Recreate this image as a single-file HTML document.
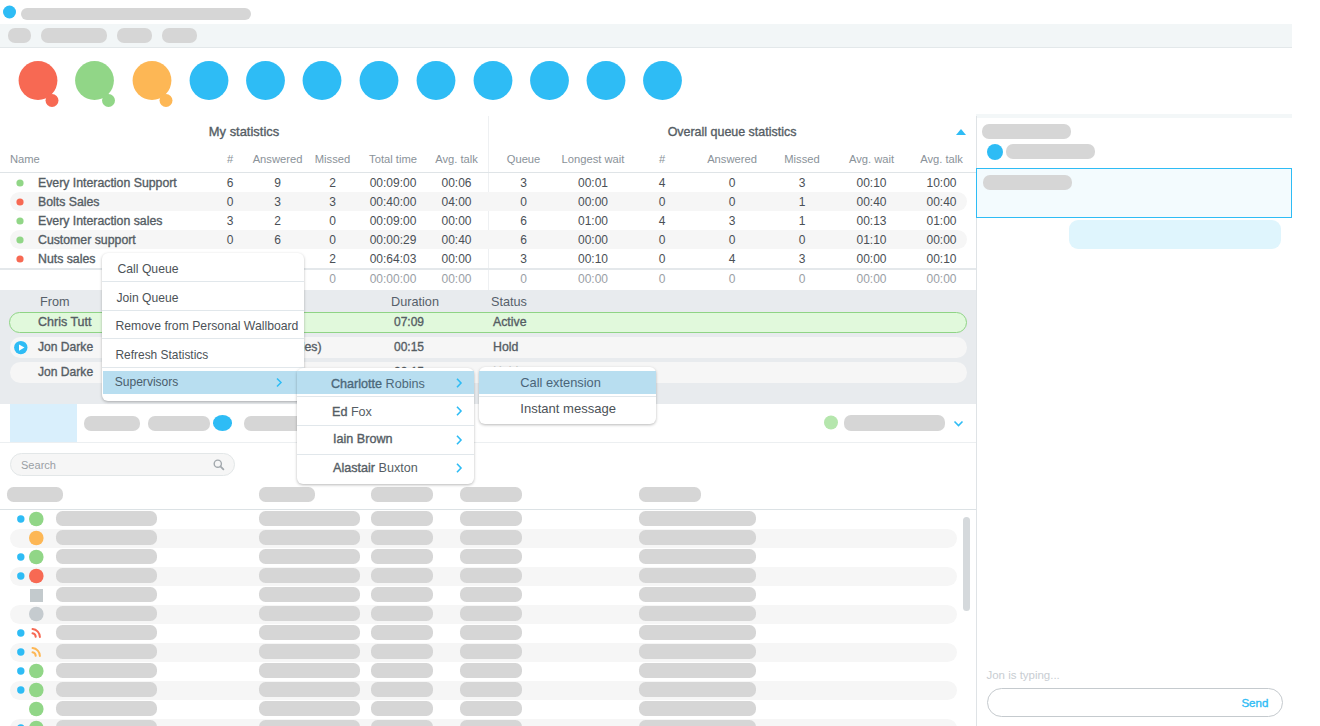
<!DOCTYPE html>
<html><head><meta charset="utf-8">
<style>
*{margin:0;padding:0;box-sizing:border-box}
html,body{width:1320px;height:726px;overflow:hidden;background:#fff;font-family:"Liberation Sans",sans-serif;color:#555d64}
.a{position:absolute}
.t{position:absolute;white-space:nowrap;line-height:0;height:0}
.bl{display:inline-block;line-height:0;vertical-align:baseline}
</style></head><body>

<svg class="a" style="left:2px;top:4px" width="16" height="16"><circle cx="7.5" cy="8" r="6.5" fill="#2ebcf5"/></svg>
<div class="a" style="left:21px;top:8px;width:230px;height:12px;border-radius:6.0px;background:#d6d6d6;"></div>
<div class="a" style="left:0px;top:24px;width:1292px;height:24px;background:#f2f6f7;border-bottom:1px solid #e3e8ea"></div>
<div class="a" style="left:8px;top:28px;width:23px;height:15px;border-radius:7px;background:#d6d6d6;"></div>
<div class="a" style="left:41px;top:28px;width:66px;height:15px;border-radius:7px;background:#d6d6d6;"></div>
<div class="a" style="left:117px;top:28px;width:35px;height:15px;border-radius:7px;background:#d6d6d6;"></div>
<div class="a" style="left:162px;top:28px;width:35px;height:15px;border-radius:7px;background:#d6d6d6;"></div>
<svg class="a" style="left:17px;top:60px" width="41" height="41"><circle cx="21" cy="20.5" r="19.4" fill="#f76953"/></svg>
<svg class="a" style="left:44px;top:93px" width="16" height="16"><circle cx="8" cy="7.5" r="6.5" fill="#f76953"/></svg>
<svg class="a" style="left:74px;top:60px" width="41" height="41"><circle cx="20.5" cy="20.5" r="19.4" fill="#91d687"/></svg>
<svg class="a" style="left:101px;top:93px" width="16" height="16"><circle cx="7.5" cy="7.5" r="6.5" fill="#91d687"/></svg>
<svg class="a" style="left:131px;top:60px" width="41" height="41"><circle cx="21" cy="20.5" r="19.4" fill="#fdb755"/></svg>
<svg class="a" style="left:158px;top:93px" width="16" height="16"><circle cx="8" cy="7.5" r="6.5" fill="#fdb755"/></svg>
<svg class="a" style="left:188px;top:60px" width="41" height="41"><circle cx="21" cy="20.5" r="19.4" fill="#2ebcf5"/></svg>
<svg class="a" style="left:245px;top:60px" width="41" height="41"><circle cx="20.5" cy="20.5" r="19.4" fill="#2ebcf5"/></svg>
<svg class="a" style="left:301px;top:60px" width="41" height="41"><circle cx="21" cy="20.5" r="19.4" fill="#2ebcf5"/></svg>
<svg class="a" style="left:358px;top:60px" width="41" height="41"><circle cx="21" cy="20.5" r="19.4" fill="#2ebcf5"/></svg>
<svg class="a" style="left:415px;top:60px" width="41" height="41"><circle cx="21" cy="20.5" r="19.4" fill="#2ebcf5"/></svg>
<svg class="a" style="left:472px;top:60px" width="41" height="41"><circle cx="21" cy="20.5" r="19.4" fill="#2ebcf5"/></svg>
<svg class="a" style="left:529px;top:60px" width="41" height="41"><circle cx="20.5" cy="20.5" r="19.4" fill="#2ebcf5"/></svg>
<svg class="a" style="left:585px;top:60px" width="41" height="41"><circle cx="21" cy="20.5" r="19.4" fill="#2ebcf5"/></svg>
<svg class="a" style="left:642px;top:60px" width="41" height="41"><circle cx="20.5" cy="20.5" r="19.4" fill="#2ebcf5"/></svg>
<div class="a" style="left:488px;top:116px;width:1px;height:174px;background:#eef0f2"></div>
<div class="t" style="left:94px;width:300px;text-align:center;top:131.52px;font-size:12.93px;color:#555d64;font-weight:normal;-webkit-text-stroke:0.35px #555d64;"><span class="bl">My statistics</span></div>
<div class="t" style="left:582px;width:300px;text-align:center;top:131.68px;font-size:12.46px;color:#555d64;font-weight:normal;-webkit-text-stroke:0.35px #555d64;"><span class="bl">Overall queue statistics</span></div>
<svg class="a" style="left:955px;top:127px" width="12" height="9"><path d="M1 8 L6 2 L11 8 Z" fill="#2ebcf5"/></svg>
<div class="t" style="left:10px;top:159.12px;font-size:11.2px;color:#8a9299;font-weight:normal;"><span class="bl">Name</span></div>
<div class="t" style="left:80px;width:300px;text-align:center;top:159.12px;font-size:11.2px;color:#8a9299;font-weight:normal;"><span class="bl">#</span></div>
<div class="t" style="left:127.5px;width:300px;text-align:center;top:159.12px;font-size:11.2px;color:#8a9299;font-weight:normal;"><span class="bl">Answered</span></div>
<div class="t" style="left:182.5px;width:300px;text-align:center;top:159.12px;font-size:11.2px;color:#8a9299;font-weight:normal;"><span class="bl">Missed</span></div>
<div class="t" style="left:243px;width:300px;text-align:center;top:159.12px;font-size:11.2px;color:#8a9299;font-weight:normal;"><span class="bl">Total time</span></div>
<div class="t" style="left:306.5px;width:300px;text-align:center;top:159.12px;font-size:11.2px;color:#8a9299;font-weight:normal;"><span class="bl">Avg. talk</span></div>
<div class="t" style="left:373.5px;width:300px;text-align:center;top:159.12px;font-size:11.2px;color:#8a9299;font-weight:normal;"><span class="bl">Queue</span></div>
<div class="t" style="left:443px;width:300px;text-align:center;top:159.12px;font-size:11.2px;color:#8a9299;font-weight:normal;"><span class="bl">Longest wait</span></div>
<div class="t" style="left:512px;width:300px;text-align:center;top:159.12px;font-size:11.2px;color:#8a9299;font-weight:normal;"><span class="bl">#</span></div>
<div class="t" style="left:582px;width:300px;text-align:center;top:159.12px;font-size:11.2px;color:#8a9299;font-weight:normal;"><span class="bl">Answered</span></div>
<div class="t" style="left:652px;width:300px;text-align:center;top:159.12px;font-size:11.2px;color:#8a9299;font-weight:normal;"><span class="bl">Missed</span></div>
<div class="t" style="left:721.5px;width:300px;text-align:center;top:159.12px;font-size:11.2px;color:#8a9299;font-weight:normal;"><span class="bl">Avg. wait</span></div>
<div class="t" style="left:791.5px;width:300px;text-align:center;top:159.12px;font-size:11.2px;color:#8a9299;font-weight:normal;"><span class="bl">Avg. talk</span></div>
<div class="a" style="left:0px;top:172px;width:976px;height:1px;background:#dfe4e7"></div>
<svg class="a" style="left:15px;top:178px" width="10" height="10"><circle cx="5" cy="5" r="3.6" fill="#91d687"/></svg>
<div class="t" style="left:38px;top:182.74px;font-size:12.3px;color:#555d64;font-weight:normal;-webkit-text-stroke:0.35px #555d64;"><span class="bl">Every Interaction Support</span></div>
<div class="t" style="left:80px;width:300px;text-align:center;top:182.84px;font-size:12px;color:#4a5056;font-weight:normal;"><span class="bl">6</span></div>
<div class="t" style="left:127.5px;width:300px;text-align:center;top:182.84px;font-size:12px;color:#4a5056;font-weight:normal;"><span class="bl">9</span></div>
<div class="t" style="left:182.5px;width:300px;text-align:center;top:182.84px;font-size:12px;color:#4a5056;font-weight:normal;"><span class="bl">2</span></div>
<div class="t" style="left:243px;width:300px;text-align:center;top:182.84px;font-size:12px;color:#4a5056;font-weight:normal;"><span class="bl">00:09:00</span></div>
<div class="t" style="left:306.5px;width:300px;text-align:center;top:182.84px;font-size:12px;color:#4a5056;font-weight:normal;"><span class="bl">00:06</span></div>
<div class="t" style="left:373.5px;width:300px;text-align:center;top:182.84px;font-size:12px;color:#4a5056;font-weight:normal;"><span class="bl">3</span></div>
<div class="t" style="left:443px;width:300px;text-align:center;top:182.84px;font-size:12px;color:#4a5056;font-weight:normal;"><span class="bl">00:01</span></div>
<div class="t" style="left:512px;width:300px;text-align:center;top:182.84px;font-size:12px;color:#4a5056;font-weight:normal;"><span class="bl">4</span></div>
<div class="t" style="left:582px;width:300px;text-align:center;top:182.84px;font-size:12px;color:#4a5056;font-weight:normal;"><span class="bl">0</span></div>
<div class="t" style="left:652px;width:300px;text-align:center;top:182.84px;font-size:12px;color:#4a5056;font-weight:normal;"><span class="bl">3</span></div>
<div class="t" style="left:721.5px;width:300px;text-align:center;top:182.84px;font-size:12px;color:#4a5056;font-weight:normal;"><span class="bl">00:10</span></div>
<div class="t" style="left:791.5px;width:300px;text-align:center;top:182.84px;font-size:12px;color:#4a5056;font-weight:normal;"><span class="bl">10:00</span></div>
<div class="a" style="left:10px;top:192px;width:957px;height:19px;border-radius:9.5px;background:#f6f6f6;"></div>
<svg class="a" style="left:15px;top:197px" width="10" height="10"><circle cx="5" cy="5" r="3.6" fill="#f76953"/></svg>
<div class="t" style="left:38px;top:201.74px;font-size:12.3px;color:#555d64;font-weight:normal;-webkit-text-stroke:0.35px #555d64;"><span class="bl">Bolts Sales</span></div>
<div class="t" style="left:80px;width:300px;text-align:center;top:201.84px;font-size:12px;color:#4a5056;font-weight:normal;"><span class="bl">0</span></div>
<div class="t" style="left:127.5px;width:300px;text-align:center;top:201.84px;font-size:12px;color:#4a5056;font-weight:normal;"><span class="bl">3</span></div>
<div class="t" style="left:182.5px;width:300px;text-align:center;top:201.84px;font-size:12px;color:#4a5056;font-weight:normal;"><span class="bl">3</span></div>
<div class="t" style="left:243px;width:300px;text-align:center;top:201.84px;font-size:12px;color:#4a5056;font-weight:normal;"><span class="bl">00:40:00</span></div>
<div class="t" style="left:306.5px;width:300px;text-align:center;top:201.84px;font-size:12px;color:#4a5056;font-weight:normal;"><span class="bl">04:00</span></div>
<div class="t" style="left:373.5px;width:300px;text-align:center;top:201.84px;font-size:12px;color:#4a5056;font-weight:normal;"><span class="bl">0</span></div>
<div class="t" style="left:443px;width:300px;text-align:center;top:201.84px;font-size:12px;color:#4a5056;font-weight:normal;"><span class="bl">00:00</span></div>
<div class="t" style="left:512px;width:300px;text-align:center;top:201.84px;font-size:12px;color:#4a5056;font-weight:normal;"><span class="bl">0</span></div>
<div class="t" style="left:582px;width:300px;text-align:center;top:201.84px;font-size:12px;color:#4a5056;font-weight:normal;"><span class="bl">0</span></div>
<div class="t" style="left:652px;width:300px;text-align:center;top:201.84px;font-size:12px;color:#4a5056;font-weight:normal;"><span class="bl">1</span></div>
<div class="t" style="left:721.5px;width:300px;text-align:center;top:201.84px;font-size:12px;color:#4a5056;font-weight:normal;"><span class="bl">00:40</span></div>
<div class="t" style="left:791.5px;width:300px;text-align:center;top:201.84px;font-size:12px;color:#4a5056;font-weight:normal;"><span class="bl">00:40</span></div>
<svg class="a" style="left:15px;top:216px" width="10" height="10"><circle cx="5" cy="5" r="3.6" fill="#91d687"/></svg>
<div class="t" style="left:38px;top:220.74px;font-size:12.3px;color:#555d64;font-weight:normal;-webkit-text-stroke:0.35px #555d64;"><span class="bl">Every Interaction sales</span></div>
<div class="t" style="left:80px;width:300px;text-align:center;top:220.84px;font-size:12px;color:#4a5056;font-weight:normal;"><span class="bl">3</span></div>
<div class="t" style="left:127.5px;width:300px;text-align:center;top:220.84px;font-size:12px;color:#4a5056;font-weight:normal;"><span class="bl">2</span></div>
<div class="t" style="left:182.5px;width:300px;text-align:center;top:220.84px;font-size:12px;color:#4a5056;font-weight:normal;"><span class="bl">0</span></div>
<div class="t" style="left:243px;width:300px;text-align:center;top:220.84px;font-size:12px;color:#4a5056;font-weight:normal;"><span class="bl">00:09:00</span></div>
<div class="t" style="left:306.5px;width:300px;text-align:center;top:220.84px;font-size:12px;color:#4a5056;font-weight:normal;"><span class="bl">00:00</span></div>
<div class="t" style="left:373.5px;width:300px;text-align:center;top:220.84px;font-size:12px;color:#4a5056;font-weight:normal;"><span class="bl">6</span></div>
<div class="t" style="left:443px;width:300px;text-align:center;top:220.84px;font-size:12px;color:#4a5056;font-weight:normal;"><span class="bl">01:00</span></div>
<div class="t" style="left:512px;width:300px;text-align:center;top:220.84px;font-size:12px;color:#4a5056;font-weight:normal;"><span class="bl">4</span></div>
<div class="t" style="left:582px;width:300px;text-align:center;top:220.84px;font-size:12px;color:#4a5056;font-weight:normal;"><span class="bl">3</span></div>
<div class="t" style="left:652px;width:300px;text-align:center;top:220.84px;font-size:12px;color:#4a5056;font-weight:normal;"><span class="bl">1</span></div>
<div class="t" style="left:721.5px;width:300px;text-align:center;top:220.84px;font-size:12px;color:#4a5056;font-weight:normal;"><span class="bl">00:13</span></div>
<div class="t" style="left:791.5px;width:300px;text-align:center;top:220.84px;font-size:12px;color:#4a5056;font-weight:normal;"><span class="bl">01:00</span></div>
<div class="a" style="left:10px;top:230px;width:957px;height:19px;border-radius:9.5px;background:#f6f6f6;"></div>
<svg class="a" style="left:15px;top:235px" width="10" height="10"><circle cx="5" cy="5" r="3.6" fill="#91d687"/></svg>
<div class="t" style="left:38px;top:239.74px;font-size:12.3px;color:#555d64;font-weight:normal;-webkit-text-stroke:0.35px #555d64;"><span class="bl">Customer support</span></div>
<div class="t" style="left:80px;width:300px;text-align:center;top:239.84px;font-size:12px;color:#4a5056;font-weight:normal;"><span class="bl">0</span></div>
<div class="t" style="left:127.5px;width:300px;text-align:center;top:239.84px;font-size:12px;color:#4a5056;font-weight:normal;"><span class="bl">6</span></div>
<div class="t" style="left:182.5px;width:300px;text-align:center;top:239.84px;font-size:12px;color:#4a5056;font-weight:normal;"><span class="bl">0</span></div>
<div class="t" style="left:243px;width:300px;text-align:center;top:239.84px;font-size:12px;color:#4a5056;font-weight:normal;"><span class="bl">00:00:29</span></div>
<div class="t" style="left:306.5px;width:300px;text-align:center;top:239.84px;font-size:12px;color:#4a5056;font-weight:normal;"><span class="bl">00:40</span></div>
<div class="t" style="left:373.5px;width:300px;text-align:center;top:239.84px;font-size:12px;color:#4a5056;font-weight:normal;"><span class="bl">6</span></div>
<div class="t" style="left:443px;width:300px;text-align:center;top:239.84px;font-size:12px;color:#4a5056;font-weight:normal;"><span class="bl">00:00</span></div>
<div class="t" style="left:512px;width:300px;text-align:center;top:239.84px;font-size:12px;color:#4a5056;font-weight:normal;"><span class="bl">0</span></div>
<div class="t" style="left:582px;width:300px;text-align:center;top:239.84px;font-size:12px;color:#4a5056;font-weight:normal;"><span class="bl">0</span></div>
<div class="t" style="left:652px;width:300px;text-align:center;top:239.84px;font-size:12px;color:#4a5056;font-weight:normal;"><span class="bl">0</span></div>
<div class="t" style="left:721.5px;width:300px;text-align:center;top:239.84px;font-size:12px;color:#4a5056;font-weight:normal;"><span class="bl">01:10</span></div>
<div class="t" style="left:791.5px;width:300px;text-align:center;top:239.84px;font-size:12px;color:#4a5056;font-weight:normal;"><span class="bl">00:00</span></div>
<svg class="a" style="left:15px;top:254px" width="10" height="10"><circle cx="5" cy="5" r="3.6" fill="#f76953"/></svg>
<div class="t" style="left:38px;top:258.74px;font-size:12.3px;color:#555d64;font-weight:normal;-webkit-text-stroke:0.35px #555d64;"><span class="bl">Nuts sales</span></div>
<div class="t" style="left:80px;width:300px;text-align:center;top:258.84px;font-size:12px;color:#4a5056;font-weight:normal;"><span class="bl">0</span></div>
<div class="t" style="left:127.5px;width:300px;text-align:center;top:258.84px;font-size:12px;color:#4a5056;font-weight:normal;"><span class="bl">0</span></div>
<div class="t" style="left:182.5px;width:300px;text-align:center;top:258.84px;font-size:12px;color:#4a5056;font-weight:normal;"><span class="bl">2</span></div>
<div class="t" style="left:243px;width:300px;text-align:center;top:258.84px;font-size:12px;color:#4a5056;font-weight:normal;"><span class="bl">00:64:03</span></div>
<div class="t" style="left:306.5px;width:300px;text-align:center;top:258.84px;font-size:12px;color:#4a5056;font-weight:normal;"><span class="bl">00:00</span></div>
<div class="t" style="left:373.5px;width:300px;text-align:center;top:258.84px;font-size:12px;color:#4a5056;font-weight:normal;"><span class="bl">3</span></div>
<div class="t" style="left:443px;width:300px;text-align:center;top:258.84px;font-size:12px;color:#4a5056;font-weight:normal;"><span class="bl">00:10</span></div>
<div class="t" style="left:512px;width:300px;text-align:center;top:258.84px;font-size:12px;color:#4a5056;font-weight:normal;"><span class="bl">0</span></div>
<div class="t" style="left:582px;width:300px;text-align:center;top:258.84px;font-size:12px;color:#4a5056;font-weight:normal;"><span class="bl">4</span></div>
<div class="t" style="left:652px;width:300px;text-align:center;top:258.84px;font-size:12px;color:#4a5056;font-weight:normal;"><span class="bl">3</span></div>
<div class="t" style="left:721.5px;width:300px;text-align:center;top:258.84px;font-size:12px;color:#4a5056;font-weight:normal;"><span class="bl">00:00</span></div>
<div class="t" style="left:791.5px;width:300px;text-align:center;top:258.84px;font-size:12px;color:#4a5056;font-weight:normal;"><span class="bl">00:10</span></div>
<div class="a" style="left:0px;top:268px;width:976px;height:2px;background:#e4e8eb"></div>
<div class="t" style="left:80px;width:300px;text-align:center;top:278.84px;font-size:12px;color:#9aa0a6;font-weight:normal;"><span class="bl">0</span></div>
<div class="t" style="left:127.5px;width:300px;text-align:center;top:278.84px;font-size:12px;color:#9aa0a6;font-weight:normal;"><span class="bl">0</span></div>
<div class="t" style="left:182.5px;width:300px;text-align:center;top:278.84px;font-size:12px;color:#9aa0a6;font-weight:normal;"><span class="bl">0</span></div>
<div class="t" style="left:243px;width:300px;text-align:center;top:278.84px;font-size:12px;color:#9aa0a6;font-weight:normal;"><span class="bl">00:00:00</span></div>
<div class="t" style="left:306.5px;width:300px;text-align:center;top:278.84px;font-size:12px;color:#9aa0a6;font-weight:normal;"><span class="bl">00:00</span></div>
<div class="t" style="left:373.5px;width:300px;text-align:center;top:278.84px;font-size:12px;color:#9aa0a6;font-weight:normal;"><span class="bl">0</span></div>
<div class="t" style="left:443px;width:300px;text-align:center;top:278.84px;font-size:12px;color:#9aa0a6;font-weight:normal;"><span class="bl">00:00</span></div>
<div class="t" style="left:512px;width:300px;text-align:center;top:278.84px;font-size:12px;color:#9aa0a6;font-weight:normal;"><span class="bl">0</span></div>
<div class="t" style="left:582px;width:300px;text-align:center;top:278.84px;font-size:12px;color:#9aa0a6;font-weight:normal;"><span class="bl">0</span></div>
<div class="t" style="left:652px;width:300px;text-align:center;top:278.84px;font-size:12px;color:#9aa0a6;font-weight:normal;"><span class="bl">0</span></div>
<div class="t" style="left:721.5px;width:300px;text-align:center;top:278.84px;font-size:12px;color:#9aa0a6;font-weight:normal;"><span class="bl">00:00</span></div>
<div class="t" style="left:791.5px;width:300px;text-align:center;top:278.84px;font-size:12px;color:#9aa0a6;font-weight:normal;"><span class="bl">00:00</span></div>
<div class="a" style="left:0px;top:290px;width:976px;height:113.5px;background:#e8ebee"></div>
<div class="t" style="left:40px;top:301.62px;font-size:12.65px;color:#56606a;font-weight:normal;"><span class="bl">From</span></div>
<div class="t" style="left:391px;top:301.6px;font-size:12.7px;color:#56606a;font-weight:normal;"><span class="bl">Duration</span></div>
<div class="t" style="left:491px;top:301.6px;font-size:12.7px;color:#56606a;font-weight:normal;"><span class="bl">Status</span></div>
<div class="a" style="left:9px;top:312px;width:958px;height:21px;background:#e1f9dc;border:1px solid #8fd485;border-radius:10.5px"></div>
<div class="t" style="left:38px;top:321.97px;font-size:12.5px;color:#555d64;font-weight:normal;-webkit-text-stroke:0.35px #555d64;"><span class="bl">Chris Tutt</span></div>
<div class="t" style="left:394px;top:322.14px;font-size:12px;color:#555d64;font-weight:normal;-webkit-text-stroke:0.35px #555d64;"><span class="bl">07:09</span></div>
<div class="t" style="left:493px;top:322.04px;font-size:12.3px;color:#555d64;font-weight:normal;-webkit-text-stroke:0.35px #555d64;"><span class="bl">Active</span></div>
<div class="a" style="left:9.5px;top:337px;width:957.5px;height:21px;border-radius:10.5px;background:#f6f6f6;"></div>
<svg class="a" style="left:13px;top:339px" width="16" height="16"><circle cx="7.800000000000001" cy="8.600000000000023" r="6.7" fill="#2ebcf5"/></svg>
<svg class="a" style="left:14px;top:341px" width="14" height="14"><path d="M5 3.5 L10.5 6.6 L5 9.7 Z" fill="#fff"/></svg>
<div class="t" style="left:38px;top:346.81px;font-size:12.1px;color:#555d64;font-weight:normal;-webkit-text-stroke:0.35px #555d64;"><span class="bl">Jon Darke</span></div>
<div class="t" style="left:21.5px;width:300px;text-align:right;top:346.74px;font-size:12.3px;color:#555d64;font-weight:normal;-webkit-text-stroke:0.35px #555d64;"><span class="bl">(Nuts sales)</span></div>
<div class="t" style="left:394px;top:346.84px;font-size:12px;color:#555d64;font-weight:normal;-webkit-text-stroke:0.35px #555d64;"><span class="bl">00:15</span></div>
<div class="t" style="left:493px;top:346.74px;font-size:12.3px;color:#555d64;font-weight:normal;-webkit-text-stroke:0.35px #555d64;"><span class="bl">Hold</span></div>
<div class="a" style="left:9.5px;top:362px;width:957.5px;height:21px;border-radius:10.5px;background:#f6f6f6;"></div>
<div class="t" style="left:38px;top:371.81px;font-size:12.1px;color:#555d64;font-weight:normal;-webkit-text-stroke:0.35px #555d64;"><span class="bl">Jon Darke</span></div>
<div class="t" style="left:394px;top:371.84px;font-size:12px;color:#555d64;font-weight:normal;-webkit-text-stroke:0.35px #555d64;"><span class="bl">00:15</span></div>
<div class="t" style="left:493px;top:371.74px;font-size:12.3px;color:#555d64;font-weight:normal;-webkit-text-stroke:0.35px #555d64;"><span class="bl">Hold</span></div>
<div class="a" style="left:10px;top:403.5px;width:67px;height:39.5px;background:#d9effc"></div>
<div class="a" style="left:84px;top:416px;width:56px;height:15px;border-radius:7px;background:#d6d6d6;"></div>
<div class="a" style="left:148px;top:416px;width:62px;height:15px;border-radius:7px;background:#d6d6d6;"></div>
<div class="a" style="left:213px;top:415px;width:19px;height:15.5px;border-radius:50%;background:#2ebcf5"></div>
<div class="a" style="left:244px;top:416px;width:60px;height:15px;border-radius:7px;background:#d6d6d6;"></div>
<svg class="a" style="left:823px;top:414px" width="17" height="17"><circle cx="8" cy="8.5" r="7" fill="#b5e6ad"/></svg>
<div class="a" style="left:844px;top:415px;width:101px;height:15.5px;border-radius:7px;background:#d6d6d6;"></div>
<svg class="a" style="left:952px;top:418px" width="12" height="10"><path d="M2.5 3.5 L6.5 7.5 L10.5 3.5" stroke="#2ebcf5" stroke-width="1.6" fill="none"/></svg>
<div class="a" style="left:0px;top:441.5px;width:976px;height:1.5px;background:#eceff1"></div>
<div class="a" style="left:10px;top:453px;width:224.5px;height:22.5px;background:#f6f6f6;border:1px solid #e3e7e8;border-radius:11.5px"></div>
<div class="t" style="left:21px;top:464.57px;font-size:11.05px;color:#9aa0a5;font-weight:normal;"><span class="bl">Search</span></div>
<svg class="a" style="left:211px;top:457px" width="15" height="15"><circle cx="6.8" cy="6.7" r="3.6" stroke="#a3a9ae" stroke-width="1.4" fill="none"/><path d="M9.4 9.3 L12.4 12.3" stroke="#a3a9ae" stroke-width="1.8" stroke-linecap="round"/></svg>
<div class="a" style="left:7px;top:487px;width:56px;height:14.5px;border-radius:6.5px;background:#d6d6d6;"></div>
<div class="a" style="left:259px;top:487px;width:56px;height:14.5px;border-radius:6.5px;background:#d6d6d6;"></div>
<div class="a" style="left:371px;top:487px;width:62px;height:14.5px;border-radius:6.5px;background:#d6d6d6;"></div>
<div class="a" style="left:460px;top:487px;width:62px;height:14.5px;border-radius:6.5px;background:#d6d6d6;"></div>
<div class="a" style="left:639px;top:487px;width:62px;height:14.5px;border-radius:6.5px;background:#d6d6d6;"></div>
<div class="a" style="left:0px;top:508.5px;width:976px;height:1.5px;background:#dce2e5"></div>
<svg class="a" style="left:16px;top:514px" width="10" height="10"><circle cx="4.800000000000001" cy="5" r="3.7" fill="#2ebcf5"/></svg>
<svg class="a" style="left:27px;top:510px" width="17" height="17"><circle cx="9.299999999999997" cy="9" r="7.3" fill="#91d687"/></svg>
<div class="a" style="left:56px;top:511px;width:101px;height:15px;border-radius:6.5px;background:#d6d6d6;"></div>
<div class="a" style="left:259px;top:511px;width:101px;height:15px;border-radius:6.5px;background:#d6d6d6;"></div>
<div class="a" style="left:371px;top:511px;width:62px;height:15px;border-radius:6.5px;background:#d6d6d6;"></div>
<div class="a" style="left:460px;top:511px;width:62px;height:15px;border-radius:6.5px;background:#d6d6d6;"></div>
<div class="a" style="left:639px;top:511px;width:117px;height:15px;border-radius:6.5px;background:#d6d6d6;"></div>
<div class="a" style="left:9.5px;top:528.7px;width:947px;height:19.2px;border-radius:9.6px;background:#f6f6f6;"></div>
<svg class="a" style="left:27px;top:529px" width="17" height="17"><circle cx="9.299999999999997" cy="9" r="7.3" fill="#fdb755"/></svg>
<div class="a" style="left:56px;top:530px;width:101px;height:15px;border-radius:6.5px;background:#d6d6d6;"></div>
<div class="a" style="left:259px;top:530px;width:101px;height:15px;border-radius:6.5px;background:#d6d6d6;"></div>
<div class="a" style="left:371px;top:530px;width:62px;height:15px;border-radius:6.5px;background:#d6d6d6;"></div>
<div class="a" style="left:460px;top:530px;width:62px;height:15px;border-radius:6.5px;background:#d6d6d6;"></div>
<div class="a" style="left:639px;top:530px;width:117px;height:15px;border-radius:6.5px;background:#d6d6d6;"></div>
<svg class="a" style="left:16px;top:552px" width="10" height="10"><circle cx="4.800000000000001" cy="5" r="3.7" fill="#2ebcf5"/></svg>
<svg class="a" style="left:27px;top:548px" width="17" height="17"><circle cx="9.299999999999997" cy="9" r="7.3" fill="#91d687"/></svg>
<div class="a" style="left:56px;top:549px;width:101px;height:15px;border-radius:6.5px;background:#d6d6d6;"></div>
<div class="a" style="left:259px;top:549px;width:101px;height:15px;border-radius:6.5px;background:#d6d6d6;"></div>
<div class="a" style="left:371px;top:549px;width:62px;height:15px;border-radius:6.5px;background:#d6d6d6;"></div>
<div class="a" style="left:460px;top:549px;width:62px;height:15px;border-radius:6.5px;background:#d6d6d6;"></div>
<div class="a" style="left:639px;top:549px;width:117px;height:15px;border-radius:6.5px;background:#d6d6d6;"></div>
<div class="a" style="left:9.5px;top:566.7px;width:947px;height:19.2px;border-radius:9.6px;background:#f6f6f6;"></div>
<svg class="a" style="left:16px;top:571px" width="10" height="10"><circle cx="4.800000000000001" cy="5" r="3.7" fill="#2ebcf5"/></svg>
<svg class="a" style="left:27px;top:567px" width="17" height="17"><circle cx="9.299999999999997" cy="9" r="7.3" fill="#f76953"/></svg>
<div class="a" style="left:56px;top:568px;width:101px;height:15px;border-radius:6.5px;background:#d6d6d6;"></div>
<div class="a" style="left:259px;top:568px;width:101px;height:15px;border-radius:6.5px;background:#d6d6d6;"></div>
<div class="a" style="left:371px;top:568px;width:62px;height:15px;border-radius:6.5px;background:#d6d6d6;"></div>
<div class="a" style="left:460px;top:568px;width:62px;height:15px;border-radius:6.5px;background:#d6d6d6;"></div>
<div class="a" style="left:639px;top:568px;width:117px;height:15px;border-radius:6.5px;background:#d6d6d6;"></div>
<div class="a" style="left:30px;top:588.5px;width:13px;height:13px;background:#c3cacd"></div>
<div class="a" style="left:56px;top:587px;width:101px;height:15px;border-radius:6.5px;background:#d6d6d6;"></div>
<div class="a" style="left:259px;top:587px;width:101px;height:15px;border-radius:6.5px;background:#d6d6d6;"></div>
<div class="a" style="left:371px;top:587px;width:62px;height:15px;border-radius:6.5px;background:#d6d6d6;"></div>
<div class="a" style="left:460px;top:587px;width:62px;height:15px;border-radius:6.5px;background:#d6d6d6;"></div>
<div class="a" style="left:639px;top:587px;width:117px;height:15px;border-radius:6.5px;background:#d6d6d6;"></div>
<div class="a" style="left:9.5px;top:604.7px;width:947px;height:19.2px;border-radius:9.6px;background:#f6f6f6;"></div>
<svg class="a" style="left:27px;top:605px" width="17" height="17"><circle cx="9.299999999999997" cy="9" r="7.3" fill="#c5cbcf"/></svg>
<div class="a" style="left:56px;top:606px;width:101px;height:15px;border-radius:6.5px;background:#d6d6d6;"></div>
<div class="a" style="left:259px;top:606px;width:101px;height:15px;border-radius:6.5px;background:#d6d6d6;"></div>
<div class="a" style="left:371px;top:606px;width:62px;height:15px;border-radius:6.5px;background:#d6d6d6;"></div>
<div class="a" style="left:460px;top:606px;width:62px;height:15px;border-radius:6.5px;background:#d6d6d6;"></div>
<div class="a" style="left:639px;top:606px;width:117px;height:15px;border-radius:6.5px;background:#d6d6d6;"></div>
<svg class="a" style="left:16px;top:628px" width="10" height="10"><circle cx="4.800000000000001" cy="5" r="3.7" fill="#2ebcf5"/></svg>
<svg class="a" style="left:30px;top:626px" width="14" height="14"><path d="M2.55 3.12 A7.9 7.9 0 0 1 9.90 11.00" stroke="#f76953" stroke-width="2" stroke-linecap="round" fill="none"/><path d="M2.51 7.34 A3.7 3.7 0 0 1 5.70 10.87" stroke="#f76953" stroke-width="2" stroke-linecap="round" fill="none"/></svg>
<div class="a" style="left:56px;top:625px;width:101px;height:15px;border-radius:6.5px;background:#d6d6d6;"></div>
<div class="a" style="left:259px;top:625px;width:101px;height:15px;border-radius:6.5px;background:#d6d6d6;"></div>
<div class="a" style="left:371px;top:625px;width:62px;height:15px;border-radius:6.5px;background:#d6d6d6;"></div>
<div class="a" style="left:460px;top:625px;width:62px;height:15px;border-radius:6.5px;background:#d6d6d6;"></div>
<div class="a" style="left:639px;top:625px;width:117px;height:15px;border-radius:6.5px;background:#d6d6d6;"></div>
<div class="a" style="left:9.5px;top:642.7px;width:947px;height:19.2px;border-radius:9.6px;background:#f6f6f6;"></div>
<svg class="a" style="left:16px;top:647px" width="10" height="10"><circle cx="4.800000000000001" cy="5" r="3.7" fill="#2ebcf5"/></svg>
<svg class="a" style="left:30px;top:645px" width="14" height="14"><path d="M2.55 3.12 A7.9 7.9 0 0 1 9.90 11.00" stroke="#fdb755" stroke-width="2" stroke-linecap="round" fill="none"/><path d="M2.51 7.34 A3.7 3.7 0 0 1 5.70 10.87" stroke="#fdb755" stroke-width="2" stroke-linecap="round" fill="none"/></svg>
<div class="a" style="left:56px;top:644px;width:101px;height:15px;border-radius:6.5px;background:#d6d6d6;"></div>
<div class="a" style="left:259px;top:644px;width:101px;height:15px;border-radius:6.5px;background:#d6d6d6;"></div>
<div class="a" style="left:371px;top:644px;width:62px;height:15px;border-radius:6.5px;background:#d6d6d6;"></div>
<div class="a" style="left:460px;top:644px;width:62px;height:15px;border-radius:6.5px;background:#d6d6d6;"></div>
<div class="a" style="left:639px;top:644px;width:117px;height:15px;border-radius:6.5px;background:#d6d6d6;"></div>
<svg class="a" style="left:16px;top:666px" width="10" height="10"><circle cx="4.800000000000001" cy="5" r="3.7" fill="#2ebcf5"/></svg>
<svg class="a" style="left:27px;top:662px" width="17" height="17"><circle cx="9.299999999999997" cy="9" r="7.3" fill="#91d687"/></svg>
<div class="a" style="left:56px;top:663px;width:101px;height:15px;border-radius:6.5px;background:#d6d6d6;"></div>
<div class="a" style="left:259px;top:663px;width:101px;height:15px;border-radius:6.5px;background:#d6d6d6;"></div>
<div class="a" style="left:371px;top:663px;width:62px;height:15px;border-radius:6.5px;background:#d6d6d6;"></div>
<div class="a" style="left:460px;top:663px;width:62px;height:15px;border-radius:6.5px;background:#d6d6d6;"></div>
<div class="a" style="left:639px;top:663px;width:117px;height:15px;border-radius:6.5px;background:#d6d6d6;"></div>
<div class="a" style="left:9.5px;top:680.7px;width:947px;height:19.2px;border-radius:9.6px;background:#f6f6f6;"></div>
<svg class="a" style="left:16px;top:685px" width="10" height="10"><circle cx="4.800000000000001" cy="5" r="3.7" fill="#2ebcf5"/></svg>
<svg class="a" style="left:27px;top:681px" width="17" height="17"><circle cx="9.299999999999997" cy="9" r="7.3" fill="#91d687"/></svg>
<div class="a" style="left:56px;top:682px;width:101px;height:15px;border-radius:6.5px;background:#d6d6d6;"></div>
<div class="a" style="left:259px;top:682px;width:101px;height:15px;border-radius:6.5px;background:#d6d6d6;"></div>
<div class="a" style="left:371px;top:682px;width:62px;height:15px;border-radius:6.5px;background:#d6d6d6;"></div>
<div class="a" style="left:460px;top:682px;width:62px;height:15px;border-radius:6.5px;background:#d6d6d6;"></div>
<div class="a" style="left:639px;top:682px;width:117px;height:15px;border-radius:6.5px;background:#d6d6d6;"></div>
<svg class="a" style="left:27px;top:700px" width="17" height="17"><circle cx="9.299999999999997" cy="9" r="7.3" fill="#91d687"/></svg>
<div class="a" style="left:56px;top:701px;width:101px;height:15px;border-radius:6.5px;background:#d6d6d6;"></div>
<div class="a" style="left:259px;top:701px;width:101px;height:15px;border-radius:6.5px;background:#d6d6d6;"></div>
<div class="a" style="left:371px;top:701px;width:62px;height:15px;border-radius:6.5px;background:#d6d6d6;"></div>
<div class="a" style="left:460px;top:701px;width:62px;height:15px;border-radius:6.5px;background:#d6d6d6;"></div>
<div class="a" style="left:639px;top:701px;width:117px;height:15px;border-radius:6.5px;background:#d6d6d6;"></div>
<div class="a" style="left:9.5px;top:718.7px;width:947px;height:19.2px;border-radius:9.6px;background:#f6f6f6;"></div>
<svg class="a" style="left:16px;top:723px" width="10" height="10"><circle cx="4.800000000000001" cy="5" r="3.7" fill="#2ebcf5"/></svg>
<svg class="a" style="left:27px;top:719px" width="17" height="17"><circle cx="9.299999999999997" cy="9" r="7.3" fill="#91d687"/></svg>
<div class="a" style="left:56px;top:720px;width:101px;height:15px;border-radius:6.5px;background:#d6d6d6;"></div>
<div class="a" style="left:259px;top:720px;width:101px;height:15px;border-radius:6.5px;background:#d6d6d6;"></div>
<div class="a" style="left:371px;top:720px;width:62px;height:15px;border-radius:6.5px;background:#d6d6d6;"></div>
<div class="a" style="left:460px;top:720px;width:62px;height:15px;border-radius:6.5px;background:#d6d6d6;"></div>
<div class="a" style="left:639px;top:720px;width:117px;height:15px;border-radius:6.5px;background:#d6d6d6;"></div>
<div class="a" style="left:963px;top:516.5px;width:7px;height:94px;border-radius:3.5px;background:#d5d9dc;"></div>
<div class="a" style="left:976px;top:114px;width:316px;height:4px;background:#f3f7f8"></div>
<div class="a" style="left:976px;top:116px;width:1px;height:610px;background:#dfe3e6"></div>
<div class="a" style="left:982px;top:124px;width:89px;height:15px;border-radius:7px;background:#d6d6d6;"></div>
<svg class="a" style="left:986px;top:143px" width="19" height="19"><circle cx="9" cy="9" r="8" fill="#2ebcf5"/></svg>
<div class="a" style="left:1006px;top:144px;width:89px;height:15px;border-radius:7px;background:#d6d6d6;"></div>
<div class="a" style="left:976px;top:168px;width:316px;height:50px;background:#f3fbfe;border:1px solid #2ebcf5"></div>
<div class="a" style="left:983px;top:175px;width:89px;height:15px;border-radius:7px;background:#d6d6d6;"></div>
<div class="a" style="left:1069px;top:220px;width:212px;height:29px;background:#dff5fd;border-radius:9px"></div>
<div class="t" style="left:986.5px;top:675.03px;font-size:11.47px;color:#c8cdd2;font-weight:normal;"><span class="bl">Jon is typing...</span></div>
<div class="a" style="left:986.5px;top:688px;width:296px;height:29px;border:1px solid #c5cace;border-radius:14.5px"></div>
<div class="t" style="left:1241.4px;top:703.19px;font-size:11.56px;color:#2ebcf5;font-weight:normal;-webkit-text-stroke:0.35px #2ebcf5;"><span class="bl">Send</span></div>
<div class="a" style="left:101.5px;top:252.5px;width:202px;height:148.5px;box-shadow:0 1px 3px rgba(0,0,0,0.28);border-radius:6px;background:#fff"></div>
<div class="a" style="left:101.5px;top:281px;width:202px;height:1px;background:#e1e7eb"></div>
<div class="a" style="left:101.5px;top:310px;width:202px;height:1px;background:#e1e7eb"></div>
<div class="a" style="left:101.5px;top:338px;width:202px;height:1px;background:#e1e7eb"></div>
<div class="a" style="left:101.5px;top:367px;width:202px;height:1px;background:#e1e7eb"></div>
<div class="t" style="left:117.5px;top:268.78px;font-size:12.19px;color:#4c5257;font-weight:normal;"><span class="bl">Call Queue</span></div>
<div class="t" style="left:116.5px;top:297.81px;font-size:12.1px;color:#4c5257;font-weight:normal;"><span class="bl">Join Queue</span></div>
<div class="t" style="left:115.5px;top:325.76px;font-size:12.23px;color:#4c5257;font-weight:normal;"><span class="bl">Remove from Personal Wallboard</span></div>
<div class="t" style="left:115.5px;top:354.87px;font-size:11.93px;color:#4c5257;font-weight:normal;"><span class="bl">Refresh Statistics</span></div>
<div class="a" style="left:103px;top:371px;width:200.5px;height:22.5px;background:#b8def0"></div>
<div class="t" style="left:114.7px;top:382.32px;font-size:12.07px;color:#4a5d6b;font-weight:normal;"><span class="bl">Supervisors</span></div>
<svg class="a" style="left:275px;top:377px" width="8" height="11"><path d="M2 1.5 L6 5.5 L2 9.5" stroke="#2ebcf5" stroke-width="1.5" fill="none"/></svg>
<div class="a" style="left:297px;top:367.5px;width:177px;height:116px;box-shadow:0 1px 3px rgba(0,0,0,0.28);border-radius:6px;background:#fff"></div>
<div class="a" style="left:297px;top:371px;width:177px;height:23px;background:#b8def0"></div>
<div class="a" style="left:297px;top:396px;width:177px;height:1px;background:#e1e7eb"></div>
<div class="a" style="left:297px;top:425px;width:177px;height:1px;background:#e1e7eb"></div>
<div class="a" style="left:297px;top:454px;width:177px;height:1px;background:#e1e7eb"></div>
<div class="t" style="left:331px;top:383.63px;font-size:12.6px;color:#4c687a;font-weight:normal;-webkit-text-stroke:0.35px #4c687a;"><span class="bl">Charlotte</span></div>
<div class="t" style="left:385.62296875px;top:383.63px;font-size:12.6px;color:#4c687a;font-weight:normal;"><span class="bl">Robins</span></div>
<div class="t" style="left:332px;top:412.23px;font-size:12.6px;color:#555d64;font-weight:normal;-webkit-text-stroke:0.35px #555d64;"><span class="bl">Ed</span></div>
<div class="t" style="left:350.9118125px;top:412.23px;font-size:12.6px;color:#555d64;font-weight:normal;"><span class="bl">Fox</span></div>
<div class="t" style="left:333px;top:439.43px;font-size:12.6px;color:#555d64;font-weight:normal;-webkit-text-stroke:0.35px #555d64;"><span class="bl">Iain</span></div>
<div class="t" style="left:356.814px;top:439.43px;font-size:12.6px;color:#555d64;font-weight:normal;-webkit-text-stroke:0.35px #555d64;"><span class="bl">Brown</span></div>
<div class="t" style="left:333px;top:468.43px;font-size:12.6px;color:#555d64;font-weight:normal;-webkit-text-stroke:0.35px #555d64;"><span class="bl">Alastair</span></div>
<div class="t" style="left:378.5135625px;top:468.43px;font-size:12.6px;color:#555d64;font-weight:normal;"><span class="bl">Buxton</span></div>
<svg class="a" style="left:454px;top:376.5px" width="10" height="12"><path d="M3 1.8 L7 6 L3 10.2" stroke="#2ebcf5" stroke-width="1.6" fill="none"/></svg>
<svg class="a" style="left:454px;top:405px" width="10" height="12"><path d="M3 1.8 L7 6 L3 10.2" stroke="#2ebcf5" stroke-width="1.6" fill="none"/></svg>
<svg class="a" style="left:454px;top:433.5px" width="10" height="12"><path d="M3 1.8 L7 6 L3 10.2" stroke="#2ebcf5" stroke-width="1.6" fill="none"/></svg>
<svg class="a" style="left:454px;top:462px" width="10" height="12"><path d="M3 1.8 L7 6 L3 10.2" stroke="#2ebcf5" stroke-width="1.6" fill="none"/></svg>
<div class="a" style="left:479px;top:367.2px;width:177px;height:56.8px;box-shadow:0 1px 3px rgba(0,0,0,0.28);border-radius:6px;background:#fff"></div>
<div class="a" style="left:479px;top:371.2px;width:177px;height:22.6px;background:#b8def0"></div>
<div class="a" style="left:479px;top:396px;width:177px;height:1px;background:#e1e7eb"></div>
<div class="t" style="left:520.3px;top:382.55px;font-size:12.83px;color:#4a6478;font-weight:normal;"><span class="bl">Call extension</span></div>
<div class="t" style="left:520.3px;top:408.78px;font-size:13.04px;color:#4c5257;font-weight:normal;"><span class="bl">Instant message</span></div>
</body></html>
